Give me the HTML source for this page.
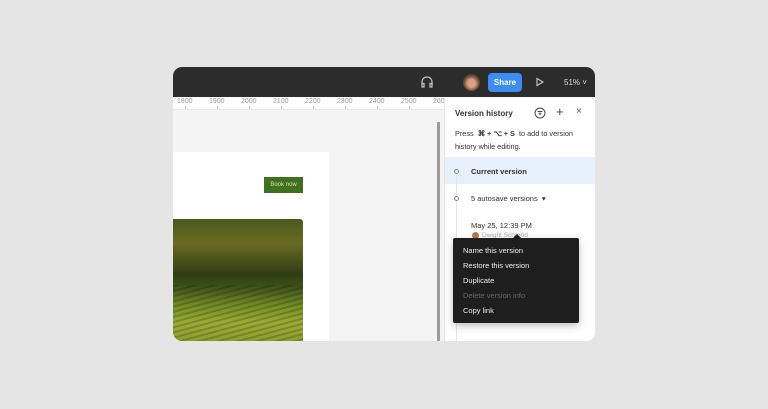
<!DOCTYPE html>
<html><head><style>
*{margin:0;padding:0;box-sizing:border-box}
body{width:768px;height:409px;background:#e5e5e5;font-family:"Liberation Sans",sans-serif;position:relative;overflow:hidden}
.win{position:absolute;left:173px;top:67px;width:422px;height:274px;border-radius:9px;overflow:hidden;background:#f4f4f4}
.tb{position:absolute;left:0;top:0;width:422px;height:30px;background:#2c2c2c}
.ruler{position:absolute;left:0;top:30px;width:271px;height:13px;background:#fff;border-bottom:1px solid #e6e6e6;font-size:7px;color:#999}
.ruler span{position:absolute;top:1px}
.ruler i{position:absolute;top:9px;width:1px;height:3px;background:#bbb}
.panel{position:absolute;left:271px;top:30px;width:151px;height:244px;background:#fff;border-left:1px solid #e6e6e6}
.t{position:absolute;white-space:nowrap}
</style></head><body>
<div class="win">
 <div class="tb">
  <svg style="position:absolute;left:247px;top:8px" width="14" height="14" viewBox="0 0 14 14" fill="none" stroke="#bbb" stroke-width="1.3"><path d="M2 10V7a5 5 0 0 1 10 0v3"/><rect x="2" y="8.5" width="2" height="3.5"/><rect x="10" y="8.5" width="2" height="3.5"/></svg>
  <div style="position:absolute;left:290px;top:7px;width:17px;height:17px;border-radius:50%;background:radial-gradient(circle at 50% 55%,#d9a184 30%,#6b4a3a 60%,#3d2d25)"></div>
  <div style="position:absolute;left:315px;top:6px;width:34px;height:19px;border-radius:4px;background:#3b8df2;color:#fff;font-size:8px;font-weight:bold;text-align:center;line-height:19px">Share</div>
  <svg style="position:absolute;left:362px;top:10px" width="10" height="10" viewBox="0 0 10 10" fill="none" stroke="#ccc" stroke-width="1.1"><path d="M2 1.5v7l6-3.5z"/></svg>
  <div class="t" style="left:391px;top:11px;color:#ddd;font-size:8px">51% ˅</div>
 </div>
 <div class="ruler">
  <span style="left:4px">1800</span><span style="left:36px">1900</span><span style="left:68px">2000</span><span style="left:100px">2100</span><span style="left:132px">2200</span><span style="left:164px">2300</span><span style="left:196px">2400</span><span style="left:228px">2500</span><span style="left:260px">260</span>
  <i style="left:12px"></i><i style="left:44px"></i><i style="left:76px"></i><i style="left:108px"></i><i style="left:140px"></i><i style="left:172px"></i><i style="left:204px"></i><i style="left:236px"></i>
 </div>
 <div style="position:absolute;left:264px;top:55px;width:3px;height:219px;background:#9c9c9c"></div>
 <div style="position:absolute;left:0;top:85px;width:156px;height:189px;background:#fff"></div>
 <div style="position:absolute;left:91px;top:110px;width:39px;height:16px;background:#3f701d;color:#cfe0c0;font-size:6px;text-align:center;line-height:16px">Book now</div>
 <div style="position:absolute;left:0;top:152px;width:130px;height:122px;border-radius:0 3px 0 0;background:linear-gradient(180deg,#4a5a1c 0%,#6a6a22 20%,#2f3e14 45%,#3a5018 55%,#6f8a26 70%,#9aac35 85%,#8c9e2e 100%)"></div>
 <div style="position:absolute;left:0;top:218px;width:130px;height:56px;background:repeating-linear-gradient(165deg,rgba(0,0,0,.18) 0 2px,transparent 2px 5px)"></div>
 <div class="panel">
  <div class="t" style="left:10px;top:12px;font-size:8px;font-weight:bold;color:#333">Version history</div>
  <svg style="position:absolute;left:89px;top:10px" width="12" height="12" viewBox="0 0 12 12" fill="none" stroke="#444" stroke-width="1"><circle cx="6" cy="6" r="5"/><path d="M3.5 4.5h5M4.5 6.2h3M5.3 7.8h1.4"/></svg>
  <div class="t" style="left:111px;top:7px;font-size:13px;color:#444">+</div>
  <div class="t" style="left:131px;top:9px;font-size:10px;color:#555">×</div>
  <div class="t" style="left:10px;top:30px;font-size:7.3px;line-height:13px;color:#333">Press &nbsp;<b>⌘ + ⌥ + S</b>&nbsp; to add to version<br>history while editing.</div>
  <div style="position:absolute;left:0;top:60px;width:151px;height:27px;background:#e6f1fc"></div>
  <div style="position:absolute;left:11px;top:76px;width:1px;height:172px;background:#e4e4e4"></div>
  <div style="position:absolute;left:9px;top:72px;width:5px;height:5px;border-radius:50%;border:1px solid #888;background:#e6f1fc"></div>
  <div class="t" style="left:26px;top:70px;font-size:7.5px;font-weight:bold;color:#333">Current version</div>
  <div style="position:absolute;left:9px;top:99px;width:5px;height:5px;border-radius:50%;border:1px solid #888;background:#fff"></div>
  <div class="t" style="left:26px;top:97px;font-size:7.5px;color:#333">5 autosave versions &nbsp;▾</div>
  <div class="t" style="left:26px;top:124px;font-size:7.5px;color:#333">May 25, 12:39 PM</div>
  <div style="position:absolute;left:27px;top:135px;width:7px;height:7px;border-radius:50%;background:#b7744f"></div>
  <div class="t" style="left:37px;top:135px;font-size:6.5px;color:#aaa">Dwight Schrood</div>
 </div>
 <div style="position:absolute;left:280px;top:171px;width:126px;height:85px;background:#1e1e1e;border-radius:2px;box-shadow:0 3px 8px rgba(0,0,0,.25);font-size:7.5px;color:#eee">
  <div style="position:absolute;left:60px;top:-4px;border:4px solid transparent;border-top:0;border-bottom-color:#1e1e1e"></div>
  <div class="t" style="left:10px;top:8px">Name this version</div>
  <div class="t" style="left:10px;top:23px">Restore this version</div>
  <div class="t" style="left:10px;top:38px">Duplicate</div>
  <div class="t" style="left:10px;top:53px;color:#666">Delete version info</div>
  <div class="t" style="left:10px;top:68px">Copy link</div>
 </div>
</div>
</body></html>
